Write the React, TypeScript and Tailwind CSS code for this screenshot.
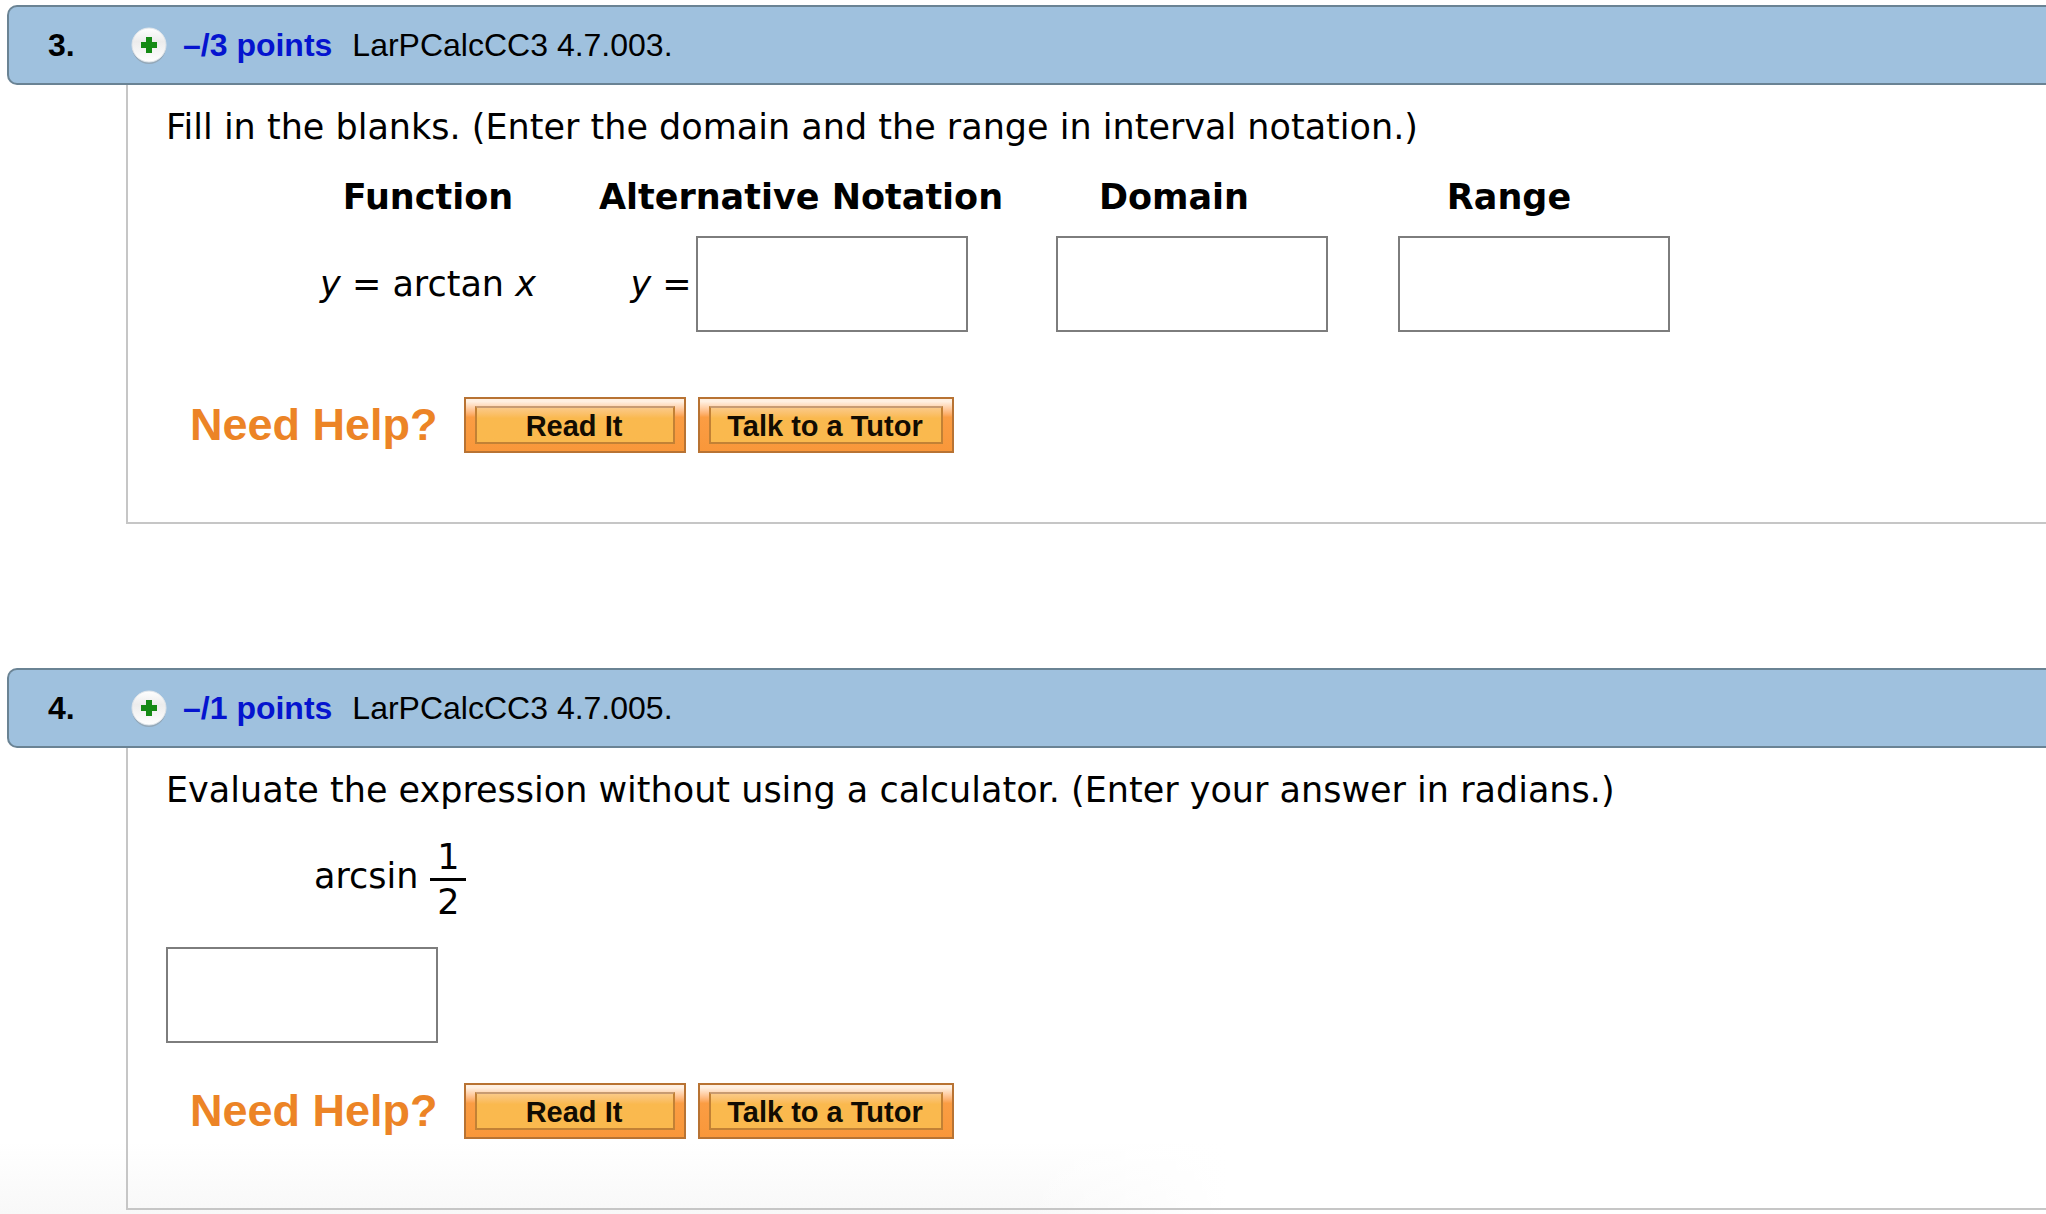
import type { ReactNode } from "react";

type QuestionProps = {
  number: string;
  points: string;
  source: string;
  children: ReactNode;
};

function PlusIcon() {
  return (
    <svg width="36" height="40" viewBox="0 0 36 40" aria-hidden="true">
      <defs>
        <linearGradient id="disc" x1="0" y1="0" x2="0" y2="1">
          <stop offset="0" stopColor="#ffffff" />
          <stop offset="0.4" stopColor="#ececec" />
          <stop offset="1" stopColor="#ffffff" />
        </linearGradient>
      </defs>
      <circle cx="18" cy="22" r="17" fill="#8f9da8" opacity="0.7" />
      <circle cx="18" cy="20" r="17" fill="url(#disc)" stroke="#dfe5ea" strokeWidth="1" />
      <path d="M15 12h6v5h5v6h-5v5h-6v-5h-5v-6h5z" fill="#158a15" />
    </svg>
  );
}

function Question({ number, points, source, children }: QuestionProps) {
  return (
    <section>
      <header className="ml-[7px] flex h-20 items-center rounded-l-[10px] border-2 border-r-0 border-[#6a8394] bg-[#9fc1de] pl-[39px] font-['Liberation_Sans',Arial,sans-serif] text-[32px] leading-9 text-black">
        <h2 className="w-[83px] font-bold">{number}</h2>
        <button type="button" aria-label="Expand question" className="mr-4 w-9">
          <PlusIcon />
        </button>
        <a href="#points" className="mr-5 font-bold text-[#0514cf]">
          {points}
        </a>
        <span>{source}</span>
      </header>
      <div className="ml-[126px] border-b-2 border-l-2 border-[#c6c6c6] pl-[38px]">{children}</div>
    </section>
  );
}

function AnswerBox({ label }: { label: string }) {
  return (
    <input
      type="text"
      aria-label={label}
      className="block h-24 w-[272px] border-2 border-[#7d7d7d] bg-white px-3 outline-none"
    />
  );
}

function HelpButton({ children, className }: { children: ReactNode; className: string }) {
  return (
    <button
      type="button"
      className={`h-14 border-2 border-[#b87333] bg-linear-to-b from-[#fff0e2] from-5% via-[#fb9d43] via-35% to-[#f9973a] px-[9px] pt-[7px] pb-[7px] ${className}`}
    >
      <span className="flex h-full items-center justify-center border-2 border-[#c28135] border-t-[#c89b72] bg-linear-to-b from-[#fbc987] to-[#fab94e] to-30% pt-[2px] pr-[2px] text-[#120c02]">
        {children}
      </span>
    </button>
  );
}

function NeedHelp() {
  return (
    <div className="flex items-center pl-6 font-['Liberation_Sans',Arial,sans-serif] text-[29px] leading-8 font-bold">
      <span className="w-[274px] text-[45px] leading-[56px] text-[#ec8426]">Need Help?</span>
      <HelpButton className="mr-3 w-[222px]">Read It</HelpButton>
      <HelpButton className="w-[256px]">Talk to a Tutor</HelpButton>
    </div>
  );
}

export default function App() {
  return (
    <main className="min-h-screen overflow-x-hidden bg-white bg-[linear-gradient(to_right,transparent_50%,white_60%),linear-gradient(to_top,#f8f8f8,white_72px)] pt-[5px] font-['Verdana','DejaVu_Sans',sans-serif] text-[35px] leading-11 text-black">
      <Question number="3." points="–/3 points" source="LarPCalcCC3 4.7.003.">
        <p className="pt-5">Fill in the blanks. (Enter the domain and the range in interval notation.)</p>
        <table className="mt-[26px] ml-24 table-fixed">
          <colgroup>
            <col className="w-[332px]" />
            <col className="w-[414px]" />
            <col className="w-[332px]" />
            <col className="w-[338px]" />
          </colgroup>
          <thead>
            <tr className="whitespace-nowrap">
              <th>Function</th>
              <th>Alternative Notation</th>
              <th>Domain</th>
              <th>Range</th>
            </tr>
          </thead>
          <tbody>
            <tr>
              <td className="pt-[17px] text-center">
                <i>y</i> = arctan <i>x</i>
              </td>
              <td className="pt-[17px] pr-1">
                <div className="flex items-center justify-center gap-1">
                  <span>
                    <i>y</i> =
                  </span>
                  <AnswerBox label="Alternative notation" />
                </div>
              </td>
              <td className="pt-[17px] pr-3">
                <div className="flex justify-end">
                  <AnswerBox label="Domain" />
                </div>
              </td>
              <td className="pt-[17px] pr-2">
                <div className="flex justify-end">
                  <AnswerBox label="Range" />
                </div>
              </td>
            </tr>
          </tbody>
        </table>
        <div className="pt-[65px] pb-[69px]">
          <NeedHelp />
        </div>
      </Question>

      <div className="h-36" />

      <Question number="4." points="–/1 points" source="LarPCalcCC3 4.7.005.">
        <p className="pt-5">Evaluate the expression without using a calculator. (Enter your answer in radians.)</p>
        <div className="mt-6 ml-[148px] flex items-center gap-3">
          <span className="pb-2">arcsin</span>
          <span className="flex w-9 flex-col text-center leading-[42px]">
            <span className="border-b-[3px] border-black">1</span>
            <span>2</span>
          </span>
        </div>
        <div className="pt-6 pb-10">
          <AnswerBox label="Answer in radians" />
        </div>
        <div className="pb-[69px]">
          <NeedHelp />
        </div>
      </Question>
    </main>
  );
}
